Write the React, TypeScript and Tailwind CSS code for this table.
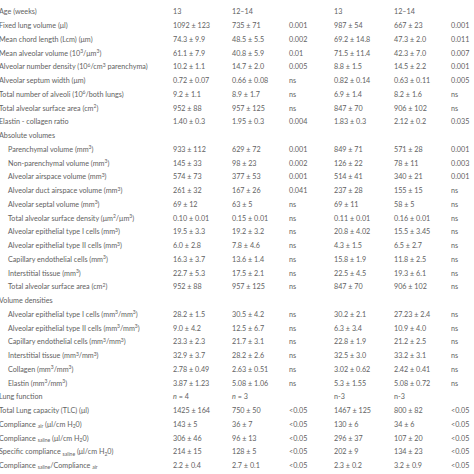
import React from "react";

type Cell = React.ReactNode;
type Row = { label: Cell; indent?: boolean; cells?: Cell[] };

const S = ({ c }: { c: string }) => <sup className="text-[5px]">{c}</sup>;
const B = ({ c }: { c: string }) => <sub className="text-[5px]">{c}</sub>;

const rows: Row[] = [
  { label: "Age (weeks)", cells: ["13", "12–14", "", "13", "12–14", ""] },
  { label: "Fixed lung volume (μl)", cells: ["1092 ± 123", "735 ± 71", "0.001", "987 ± 54", "667 ± 23", "0.001"] },
  { label: "Mean chord length (Lcm) (μm)", cells: ["74.3 ± 9.9", "48.5 ± 5.5", "0.002", "69.2 ± 14.8", "47.3 ± 2.0", "0.011"] },
  { label: <>Mean alveolar volume (10<S c="3" />/μm<S c="3" />)</>, cells: ["61.1 ± 7.9", "40.8 ± 5.9", "0.01", "71.5 ± 11.4", "42.3 ± 7.0", "0.007"] },
  { label: <>Alveolar number density (10<S c="6" />/cm<S c="3" /> parenchyma)</>, cells: ["10.2 ± 1.1", "14.7 ± 2.0", "0.005", "8.8 ± 1.5", "14.5 ± 2.2", "0.001"] },
  { label: "Alveolar septum width (μm)", cells: ["0.72 ± 0.07", "0.66 ± 0.08", "ns", "0.82 ± 0.14", "0.63 ± 0.11", "0.005"] },
  { label: <>Total number of alveoli (10<S c="6" />/both lungs)</>, cells: ["9.2 ± 1.1", "8.9 ± 1.7", "ns", "6.9 ± 1.4", "8.2 ± 1.6", "ns"] },
  { label: <>Total alveolar surface area (cm<S c="2" />)</>, cells: ["952 ± 88", "957 ± 125", "ns", "847 ± 70", "906 ± 102", "ns"] },
  { label: "Elastin - collagen ratio", cells: ["1.40 ± 0.3", "1.95 ± 0.3", "0.004", "1.83 ± 0.3", "2.12 ± 0.2", "0.035"] },
  { label: "Absolute volumes" },
  { indent: true, label: <>Parenchymal volume (mm<S c="3" />)</>, cells: ["933 ± 112", "629 ± 72", "0.001", "849 ± 71", "571 ± 28", "0.001"] },
  { indent: true, label: <>Non-parenchymal volume (mm<S c="3" />)</>, cells: ["145 ± 33", "98 ± 23", "0.002", "126 ± 22", "78 ± 11", "0.003"] },
  { indent: true, label: <>Alveolar airspace volume (mm<S c="3" />)</>, cells: ["574 ± 73", "377 ± 53", "0.001", "514 ± 41", "340 ± 21", "0.001"] },
  { indent: true, label: <>Alveolar duct airspace volume (mm<S c="3" />)</>, cells: ["261 ± 32", "167 ± 26", "0.041", "237 ± 28", "155 ± 15", "ns"] },
  { indent: true, label: <>Alveolar septal volume (mm<S c="3" />)</>, cells: ["69 ± 12", "63 ± 5", "ns", "69 ± 11", "58 ± 5", "ns"] },
  { indent: true, label: <>Total alveolar surface density (μm<S c="2" />/μm<S c="3" />)</>, cells: ["0.10 ± 0.01", "0.15 ± 0.01", "ns", "0.11 ± 0.01", "0.16 ± 0.01", "ns"] },
  { indent: true, label: <>Alveolar epithelial type I cells (mm<S c="3" />)</>, cells: ["19.5 ± 3.3", "19.2 ± 3.2", "ns", "20.8 ± 4.02", "15.5 ± 3.45", "ns"] },
  { indent: true, label: <>Alveolar epithelial type II cells (mm<S c="3" />)</>, cells: ["6.0 ± 2.8", "7.8 ± 4.6", "ns", "4.3 ± 1.5", "6.5 ± 2.7", "ns"] },
  { indent: true, label: <>Capillary endothelial cells (mm<S c="3" />)</>, cells: ["16.3 ± 3.7", "13.6 ± 1.4", "ns", "15.8 ± 1.9", "11.8 ± 2.5", "ns"] },
  { indent: true, label: <>Interstitial tissue (mm<S c="3" />)</>, cells: ["22.7 ± 5.3", "17.5 ± 2.1", "ns", "22.5 ± 4.5", "19.3 ± 6.1", "ns"] },
  { indent: true, label: <>Total alveolar surface area (cm<S c="2" />)</>, cells: ["952 ± 88", "957 ± 125", "ns", "847 ± 70", "906 ± 102", "ns"] },
  { label: "Volume densities" },
  { indent: true, label: <>Alveolar epithelial type I cells (mm<S c="3" />/mm<S c="3" />)</>, cells: ["28.2 ± 1.5", "30.5 ± 4.2", "ns", "30.2 ± 2.1", "27.23 ± 2.4", "ns"] },
  { indent: true, label: <>Alveolar epithelial type II cells (mm<S c="3" />/mm<S c="3" />)</>, cells: ["9.0 ± 4.2", "12.5 ± 6.7", "ns", "6.3 ± 3.4", "10.9 ± 4.0", "ns"] },
  { indent: true, label: <>Capillary endothelial cells (mm<S c="3" />/mm<S c="3" />)</>, cells: ["23.3 ± 2.3", "21.7 ± 3.1", "ns", "22.8 ± 1.9", "21.2 ± 2.5", "ns"] },
  { indent: true, label: <>Interstitial tissue (mm<S c="3" />/mm<S c="3" />)</>, cells: ["32.9 ± 3.7", "28.2 ± 2.6", "ns", "32.5 ± 3.0", "33.2 ± 3.1", "ns"] },
  { indent: true, label: <>Collagen (mm<S c="3" />/mm<S c="3" />)</>, cells: ["2.78 ± 0.49", "2.63 ± 0.51", "ns", "3.02 ± 0.62", "2.42 ± 0.41", "ns"] },
  { indent: true, label: <>Elastin (mm<S c="3" />/mm<S c="3" />)</>, cells: ["3.87 ± 1.23", "5.08 ± 1.06", "ns", "5.3 ± 1.55", "5.08 ± 0.72", "ns"] },
  { label: "Lung function", cells: [<><i>n</i> = 4</>, <><i>n</i> = 3</>, "", "n-3", "n-3", ""] },
  { label: "Total Lung capacity (TLC) (μl)", cells: ["1425 ± 164", "750 ± 50", "<0.05", "1467 ± 125", "800 ± 82", "<0.05"] },
  { label: <>Compliance <B c="air" /> (μl/cm H<B c="2" />0)</>, cells: ["143 ± 5", "36 ± 7", "<0.05", "130 ± 6", "34 ± 6", "<0.05"] },
  { label: <>Compliance <B c="saline" /> (μl/cm H<B c="2" />0)</>, cells: ["306 ± 46", "96 ± 13", "<0.05", "296 ± 37", "107 ± 20", "<0.05"] },
  { label: <>Specific compliance <B c="saline" /> (μl/cm H<B c="2" />0)</>, cells: ["214 ± 15", "128 ± 5", "<0.05", "202 ± 9", "134 ± 23", "<0.05"] },
  { label: <>Compliance <B c="saline" />/Compliance <B c="air" /></>, cells: ["2.2 ± 0.4", "2.7 ± 0.1", "<0.05", "2.3 ± 0.2", "3.2 ± 0.9", "<0.05"] },
];

const widths = ["w-[59px]", "w-[57px]", "w-[45px]", "w-[60px]", "w-[57px]", "w-[30px]"];

export default function App() {
  return (
    <div
      className="w-[474px] h-[474px] overflow-hidden bg-white text-[#626262] text-[7.2px] leading-none"
      style={{ fontFamily: "Lato, 'Open Sans', sans-serif" }}
    >
      <div className="flex flex-col pt-[5px] -ml-[1px]">
        {rows.map((r, i) => (
          <div key={i} className="flex items-center h-[13.76px] whitespace-nowrap">
            <div className={`w-[174px] shrink-0 ${r.indent ? "pl-[9px]" : ""}`}>{r.label}</div>
            {r.cells?.map((c, j) => (
              <div key={j} className={`${widths[j]} shrink-0`}>
                {c}
              </div>
            ))}
          </div>
        ))}
      </div>
    </div>
  );
}
